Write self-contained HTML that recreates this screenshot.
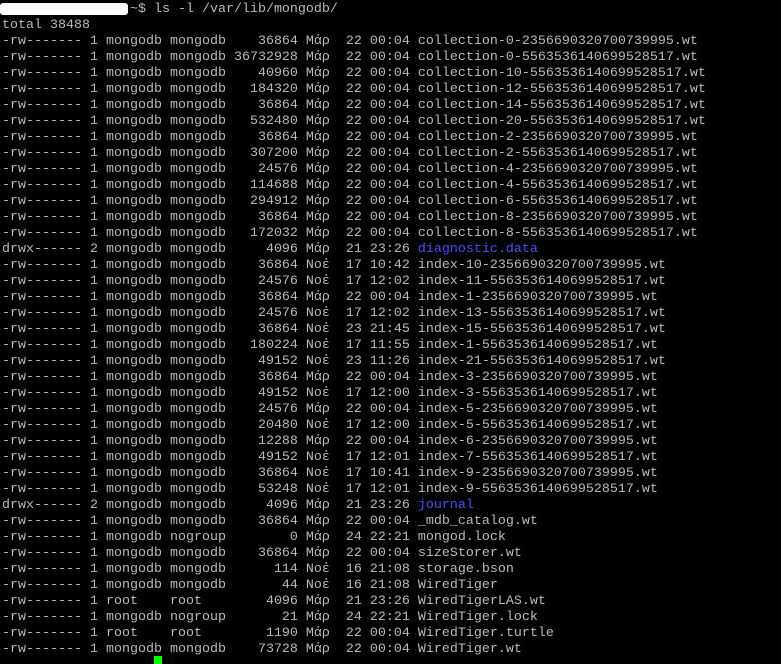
<!DOCTYPE html>
<html><head><meta charset="utf-8"><style>
html,body{margin:0;padding:0;background:#000;width:781px;height:660px;overflow:hidden}
pre{margin:0;position:absolute;left:2px;top:2px;font-family:"Liberation Mono",monospace;font-size:13.33px;line-height:16px;color:#bbbbbb;white-space:pre}
.b{color:#4b4bff}
.blob{position:absolute;left:0;top:3px;width:128px;height:12px;background:#fff;border-radius:3px}
.cur{position:absolute;left:154px;top:656px;width:8px;height:8px;background:#00ff00}
</style></head><body>
<div class="blob"></div>
<pre>                ~$ ls -l /var/lib/mongodb/
total 38488
-rw------- 1 mongodb mongodb    36864 Μάρ  22 00:04 collection-0-2356690320700739995.wt
-rw------- 1 mongodb mongodb 36732928 Μάρ  22 00:04 collection-0-5563536140699528517.wt
-rw------- 1 mongodb mongodb    40960 Μάρ  22 00:04 collection-10-5563536140699528517.wt
-rw------- 1 mongodb mongodb   184320 Μάρ  22 00:04 collection-12-5563536140699528517.wt
-rw------- 1 mongodb mongodb    36864 Μάρ  22 00:04 collection-14-5563536140699528517.wt
-rw------- 1 mongodb mongodb   532480 Μάρ  22 00:04 collection-20-5563536140699528517.wt
-rw------- 1 mongodb mongodb    36864 Μάρ  22 00:04 collection-2-2356690320700739995.wt
-rw------- 1 mongodb mongodb   307200 Μάρ  22 00:04 collection-2-5563536140699528517.wt
-rw------- 1 mongodb mongodb    24576 Μάρ  22 00:04 collection-4-2356690320700739995.wt
-rw------- 1 mongodb mongodb   114688 Μάρ  22 00:04 collection-4-5563536140699528517.wt
-rw------- 1 mongodb mongodb   294912 Μάρ  22 00:04 collection-6-5563536140699528517.wt
-rw------- 1 mongodb mongodb    36864 Μάρ  22 00:04 collection-8-2356690320700739995.wt
-rw------- 1 mongodb mongodb   172032 Μάρ  22 00:04 collection-8-5563536140699528517.wt
drwx------ 2 mongodb mongodb     4096 Μάρ  21 23:26 <span class="b">diagnostic.data</span>
-rw------- 1 mongodb mongodb    36864 Νοέ  17 10:42 index-10-2356690320700739995.wt
-rw------- 1 mongodb mongodb    24576 Νοέ  17 12:02 index-11-5563536140699528517.wt
-rw------- 1 mongodb mongodb    36864 Μάρ  22 00:04 index-1-2356690320700739995.wt
-rw------- 1 mongodb mongodb    24576 Νοέ  17 12:02 index-13-5563536140699528517.wt
-rw------- 1 mongodb mongodb    36864 Νοέ  23 21:45 index-15-5563536140699528517.wt
-rw------- 1 mongodb mongodb   180224 Νοέ  17 11:55 index-1-5563536140699528517.wt
-rw------- 1 mongodb mongodb    49152 Νοέ  23 11:26 index-21-5563536140699528517.wt
-rw------- 1 mongodb mongodb    36864 Μάρ  22 00:04 index-3-2356690320700739995.wt
-rw------- 1 mongodb mongodb    49152 Νοέ  17 12:00 index-3-5563536140699528517.wt
-rw------- 1 mongodb mongodb    24576 Μάρ  22 00:04 index-5-2356690320700739995.wt
-rw------- 1 mongodb mongodb    20480 Νοέ  17 12:00 index-5-5563536140699528517.wt
-rw------- 1 mongodb mongodb    12288 Μάρ  22 00:04 index-6-2356690320700739995.wt
-rw------- 1 mongodb mongodb    49152 Νοέ  17 12:01 index-7-5563536140699528517.wt
-rw------- 1 mongodb mongodb    36864 Νοέ  17 10:41 index-9-2356690320700739995.wt
-rw------- 1 mongodb mongodb    53248 Νοέ  17 12:01 index-9-5563536140699528517.wt
drwx------ 2 mongodb mongodb     4096 Μάρ  21 23:26 <span class="b">journal</span>
-rw------- 1 mongodb mongodb    36864 Μάρ  22 00:04 _mdb_catalog.wt
-rw------- 1 mongodb nogroup        0 Μάρ  24 22:21 mongod.lock
-rw------- 1 mongodb mongodb    36864 Μάρ  22 00:04 sizeStorer.wt
-rw------- 1 mongodb mongodb      114 Νοέ  16 21:08 storage.bson
-rw------- 1 mongodb mongodb       44 Νοέ  16 21:08 WiredTiger
-rw------- 1 root    root        4096 Μάρ  21 23:26 WiredTigerLAS.wt
-rw------- 1 mongodb nogroup       21 Μάρ  24 22:21 WiredTiger.lock
-rw------- 1 root    root        1190 Μάρ  22 00:04 WiredTiger.turtle
-rw------- 1 mongodb mongodb    73728 Μάρ  22 00:04 WiredTiger.wt
</pre>
<div class="cur"></div>
</body></html>
